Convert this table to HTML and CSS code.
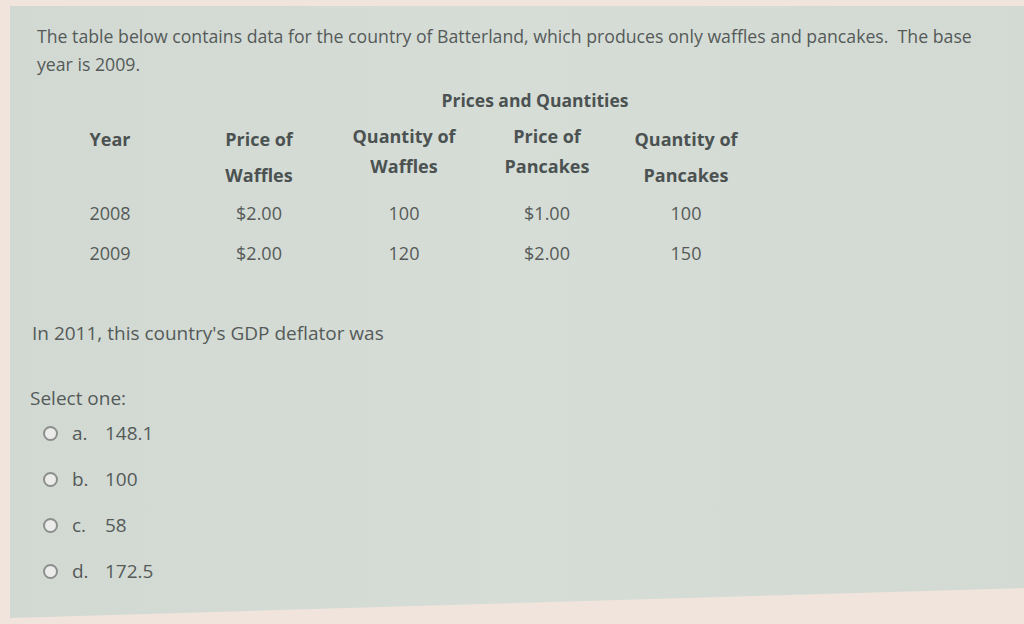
FILE: index.html
```html
<!DOCTYPE html>
<html>
<head>
<meta charset="utf-8">
<link rel="stylesheet" href="styles.css">
</head>
<body>
<div class="panel">
  <p class="intro">The table below contains data for the country of Batterland, which produces only waffles and pancakes.&nbsp; The base year is 2009.</p>
  <div class="table">
    <div class="caption">Prices and Quantities</div>
    <div class="th">Year</div>
    <div class="th">Price of<br>Waffles</div>
    <div class="th up">Quantity of<br>Waffles</div>
    <div class="th up">Price of<br>Pancakes</div>
    <div class="th">Quantity of<br>Pancakes</div>
    <div class="td">2008</div>
    <div class="td">$2.00</div>
    <div class="td">100</div>
    <div class="td">$1.00</div>
    <div class="td">100</div>
    <div class="td">2009</div>
    <div class="td">$2.00</div>
    <div class="td">120</div>
    <div class="td">$2.00</div>
    <div class="td">150</div>
  </div>
  <p class="question">In 2011, this country's GDP deflator was</p>
  <p class="select">Select one:</p>
  <div class="options">
    <label class="opt"><span class="radio"></span><span class="letter">a.</span><span class="val">148.1</span></label>
    <label class="opt"><span class="radio"></span><span class="letter">b.</span><span class="val">100</span></label>
    <label class="opt"><span class="radio"></span><span class="letter">c.</span><span class="val">58</span></label>
    <label class="opt"><span class="radio"></span><span class="letter">d.</span><span class="val">172.5</span></label>
  </div>
</div>
</body>
</html>
```
FILE: styles.css
```css
html, body {
  margin: 0;
  padding: 0;
}
body {
  background: #f0e4dc;
  width: 1024px;
  height: 624px;
  overflow: hidden;
  font-family: "Open Sans", "Liberation Sans", sans-serif;
  color: #555a59;
}
.panel {
  margin: 6px 0 0 10px;
  height: 612px;
  background: linear-gradient(90deg, #d2d9d3 0%, #d6ddd7 50%, #d3dad3 100%);
  clip-path: polygon(0 0, 100% 0, 100% 582px, 0 612px);
  padding: 16px 20px 0 27px;
  box-sizing: border-box;
}
.intro {
  margin: 0;
  font-size: 17.7px;
  line-height: 28px;
  max-width: 950px;
}
.table {
  display: grid;
  grid-template-columns: 144px 154px 136px 150px 128px;
  margin: 11px 0 0 1px;
  text-align: center;
}
.caption {
  grid-column: 3 / 6;
  font-weight: 700;
  font-size: 17.5px;
  color: #4b5251;
  padding-right: 16px;
  line-height: 22px;
}
.th {
  font-weight: 700;
  font-size: 18px;
  color: #4b5251;
  line-height: 36px;
  padding-top: 10px;
}
.th.up {
  line-height: 30px;
}
.td {
  font-size: 18px;
  line-height: 40px;
}
.question {
  margin: 48px 0 0 -5px;
  font-size: 19px;
  line-height: 24px;
}
.select {
  margin: 41px 0 0 -7px;
  font-size: 19px;
  line-height: 24px;
}
.options {
  display: flex;
  flex-direction: column;
  gap: 22px;
  margin: 11px 0 0 6px;
}
.opt {
  display: flex;
  align-items: center;
  font-size: 19px;
  line-height: 24px;
}
.radio {
  width: 11px;
  height: 11px;
  border-radius: 50%;
  border: 2px solid #8c8f8e;
  background: #ebebea;
  margin-right: 14px;
}
.letter {
  width: 33px;
}
```
